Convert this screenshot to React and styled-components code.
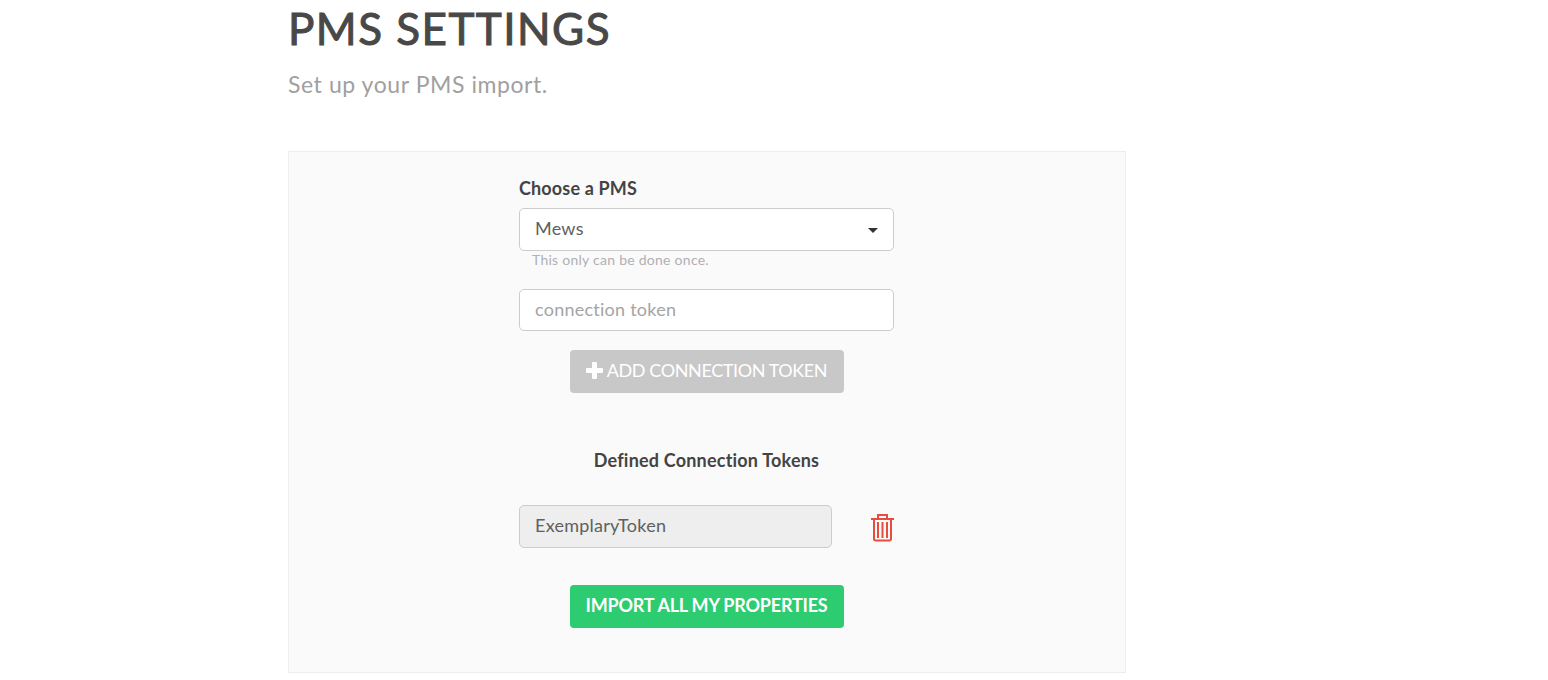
import React from 'react';
import styled, { createGlobalStyle } from 'styled-components';

const GlobalStyle = createGlobalStyle`
  html, body {
    margin: 0;
    background: #fff;
    color: #444;
    font-family: "Lato", "Liberation Sans", sans-serif;
  }
  * {
    box-sizing: border-box;
  }
`;

const Page = styled.div`
  width: 838px;
  margin-left: 288px;
`;

const Title = styled.h1`
  margin: 0;
  height: 59px;
  font-size: 44px;
  line-height: 57px;
  font-weight: 400;
  letter-spacing: 1.45px;
  -webkit-text-stroke: 1px #484848;
  color: #484848;
`;

const Subtitle = styled.p`
  margin: 10px 0 51px;
  height: 31px;
  font-size: 23px;
  line-height: 30px;
  font-weight: 400;
  letter-spacing: 0.57px;
  color: #a0a0a0;
`;

const Panel = styled.section`
  height: 522px;
  padding: 26px 0 0 230px;
  background: #fafafa;
  border: 1px solid #eee;
`;

const Form = styled.form`
  width: 375px;
  display: flex;
  flex-direction: column;
`;

const Label = styled.label`
  height: 21px;
  font-size: 18px;
  line-height: 21px;
  font-weight: 700;
  letter-spacing: 0.15px;
  color: #444;
  margin-bottom: 9px;
`;

const SelectWrap = styled.div`
  position: relative;
  height: 43px;
`;

const Select = styled.select`
  width: 100%;
  height: 100%;
  padding: 0 15px 3px;
  appearance: none;
  background: #fff;
  border: 1px solid #ccc;
  border-radius: 5px;
  font: inherit;
  font-size: 18px;
  letter-spacing: 0.25px;
  color: #606060;
`;

const Caret = styled.span`
  position: absolute;
  top: 20px;
  right: 16px;
  border-top: 5px solid #333;
  border-left: 5px solid transparent;
  border-right: 5px solid transparent;
  pointer-events: none;
`;

const Hint = styled.small`
  display: block;
  height: 38px;
  padding-left: 13px;
  font-size: 14px;
  line-height: 18px;
  letter-spacing: 0.26px;
  color: #b0b0b5;
`;

const TextInput = styled.input`
  display: block;
  width: ${props => props.width || '100%'};
  height: ${props => props.height || '42px'};
  padding: 0 15px 3px;
  background: ${props => (props.disabled ? '#eee' : '#fff')};
  border: 1px solid #ccc;
  border-radius: 5px;
  font: inherit;
  font-size: 18px;
  letter-spacing: 0.25px;
  color: #606060;
  opacity: 1;

  &::placeholder {
    color: #a4a4a4;
    opacity: 1;
  }
`;

const ActionButton = styled.button`
  align-self: center;
  display: flex;
  align-items: center;
  justify-content: center;
  gap: 4px;
  width: 274px;
  height: 43px;
  margin-top: ${props => props.$top};
  padding: 0 0 3px;
  background: ${props => props.$bg};
  border: none;
  border-radius: 4px;
  color: #fff;
  font: inherit;
  font-size: 18px;
  font-weight: ${props => props.$weight};
  letter-spacing: ${props => props.$spacing};
`;

const Heading = styled.h3`
  margin: 56px 0 34px;
  height: 22px;
  font-size: 18px;
  line-height: 22px;
  font-weight: 700;
  letter-spacing: 0.2px;
  text-align: center;
  color: #444;
`;

const TokenRow = styled.div`
  display: flex;
  align-items: center;
  justify-content: space-between;
`;

const TrashButton = styled.button`
  display: flex;
  margin: 3px 0 0;
  padding: 0;
  border: none;
  background: none;
  color: #e74c3c;
`;

const PlusIcon = () => (
  <svg width="17" height="17" viewBox="0 0 17 17" fill="currentColor">
    <path d="M7 0h3a1 1 0 0 1 1 1v5h5a1 1 0 0 1 1 1v3a1 1 0 0 1-1 1h-5v5a1 1 0 0 1-1 1H7a1 1 0 0 1-1-1v-5H1a1 1 0 0 1-1-1V7a1 1 0 0 1 1-1h5V1a1 1 0 0 1 1-1z" />
  </svg>
);

const TrashIcon = () => (
  <svg width="23" height="28" viewBox="0 0 23 28" fill="none" stroke="currentColor" strokeWidth="2">
    <path d="M0 5h23" />
    <path d="M7 5V1h9v4" />
    <path d="M3 5v20a1.5 1.5 0 0 0 1.5 1.5h14a1.5 1.5 0 0 0 1.5-1.5V5" />
    <path d="M7 8v16M11.5 8v16M16 8v16" />
  </svg>
);

const App = () => (
  <Page>
    <GlobalStyle />
    <Title>PMS SETTINGS</Title>
    <Subtitle>Set up your PMS import.</Subtitle>
    <Panel>
      <Form>
        <Label htmlFor="pms">Choose a PMS</Label>
        <SelectWrap>
          <Select id="pms" defaultValue="mews">
            <option value="mews">Mews</option>
          </Select>
          <Caret />
        </SelectWrap>
        <Hint>This only can be done once.</Hint>
        <TextInput placeholder="connection token" />
        <ActionButton type="button" $top="19px" $bg="#c8c8c8" $weight={400} $spacing="-0.4px">
          <PlusIcon />
          ADD CONNECTION TOKEN
        </ActionButton>
        <Heading>Defined Connection Tokens</Heading>
        <TokenRow>
          <TextInput width="313px" height="43px" value="ExemplaryToken" disabled readOnly />
          <TrashButton type="button" aria-label="Delete token">
            <TrashIcon />
          </TrashButton>
        </TokenRow>
        <ActionButton type="button" $top="37px" $bg="#2ecc71" $weight={700} $spacing="-0.2px">
          IMPORT ALL MY PROPERTIES
        </ActionButton>
      </Form>
    </Panel>
  </Page>
);

export default App;
